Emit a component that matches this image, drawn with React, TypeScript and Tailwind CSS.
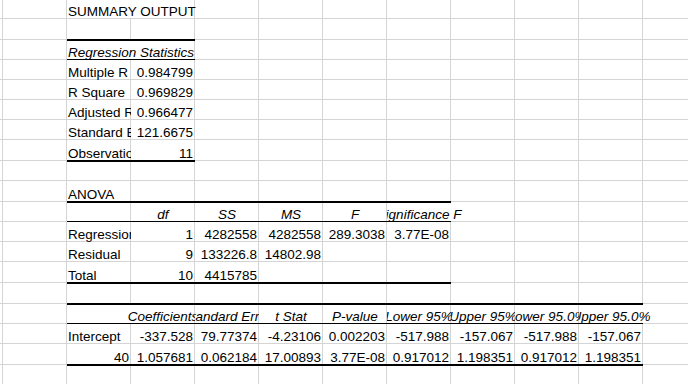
import clsx from 'clsx';

type Cell = {
  t?: string;
  a?: 'l' | 'r' | 'c';
  i?: boolean;
  spill?: 'l' | 'r';
  wide?: boolean;
  open?: boolean;
};

type Row = {
  h: string;
  line?: [number, number, 'thin' | 'thick'];
  cells?: Record<number, Cell>;
};

const hd = (t: string, extra: Partial<Cell> = {}): Cell => ({ t, a: 'c', i: true, ...extra });
const num = (t: string): Cell => ({ t, a: 'r' });
const lbl = (t: string): Cell => ({ t });

const rowOf = (label: Cell, values: string[]) => {
  const cells: Record<number, Cell> = { 0: label };
  values.forEach((v, k) => {
    if (v) cells[k + 1] = num(v);
  });
  return cells;
};

const rows: Row[] = [
  { h: 'h-[19px]', cells: { 0: { t: 'SUMMARY OUTPUT', spill: 'r', open: true } } },
  { h: 'h-[21px]', line: [0, 1, 'thick'] },
  { h: 'h-5', line: [0, 1, 'thin'], cells: { 0: hd('Regression Statistics', { wide: true, spill: 'r', open: true }) } },
  { h: 'h-5', cells: rowOf(lbl('Multiple R'), ['0.984799']) },
  { h: 'h-5', cells: rowOf(lbl('R Square'), ['0.969829']) },
  { h: 'h-5', cells: rowOf(lbl('Adjusted R Square'), ['0.966477']) },
  { h: 'h-5', cells: rowOf(lbl('Standard Error'), ['121.6675']) },
  { h: 'h-[21px]', line: [0, 1, 'thick'], cells: rowOf(lbl('Observations'), ['11']) },
  { h: 'h-5' },
  { h: 'h-[21px]', line: [0, 5, 'thick'], cells: { 0: lbl('ANOVA') } },
  {
    h: 'h-5',
    line: [0, 5, 'thin'],
    cells: { 1: hd('df'), 2: hd('SS'), 3: hd('MS'), 4: hd('F'), 5: hd('Significance F', { spill: 'r', open: true }) },
  },
  { h: 'h-5', cells: rowOf(lbl('Regression'), ['1', '4282558', '4282558', '289.3038', '3.77E-08']) },
  { h: 'h-5', cells: rowOf(lbl('Residual'), ['9', '133226.8', '14802.98']) },
  { h: 'h-[21px]', line: [0, 5, 'thick'], cells: rowOf(lbl('Total'), ['10', '4415785']) },
  { h: 'h-[21px]', line: [0, 8, 'thick'] },
  {
    h: 'h-5',
    line: [0, 8, 'thin'],
    cells: {
      0: { open: true },
      1: hd('Coefficients', { spill: 'l' }),
      2: hd('Standard Error'),
      3: hd('t Stat'),
      4: hd('P-value'),
      5: hd('Lower 95%'),
      6: hd('Upper 95%'),
      7: hd('Lower 95.0%'),
      8: hd('Upper 95.0%', { spill: 'r', open: true }),
    },
  },
  {
    h: 'h-5',
    cells: rowOf(lbl('Intercept'), [
      '-337.528', '79.77374', '-4.23106', '0.002203', '-517.988', '-157.067', '-517.988', '-157.067',
    ]),
  },
  {
    h: 'h-[21px]',
    line: [0, 8, 'thick'],
    cells: rowOf(num('40'), [
      '1.057681', '0.062184', '17.00893', '3.77E-08', '0.917012', '1.198351', '0.917012', '1.198351',
    ]),
  },
  { h: 'h-5' },
];

// gridlines and table rules are drawn as inset shadows so black rules cover the grey corners
function rules(bottomBlack: boolean, topBlack: boolean, open: boolean) {
  if (topBlack) {
    if (bottomBlack)
      return open
        ? '[box-shadow:inset_0_1px_0_#000,inset_0_-1px_0_#000]'
        : '[box-shadow:inset_0_1px_0_#000,inset_0_-1px_0_#000,inset_-1px_0_0_#d4d4d4]';
    return open
      ? '[box-shadow:inset_0_1px_0_#000,inset_0_-1px_0_#d4d4d4]'
      : '[box-shadow:inset_0_1px_0_#000,inset_-1px_0_0_#d4d4d4,inset_0_-1px_0_#d4d4d4]';
  }
  if (bottomBlack)
    return open ? '[box-shadow:inset_0_-1px_0_#000]' : '[box-shadow:inset_0_-1px_0_#000,inset_-1px_0_0_#d4d4d4]';
  return open ? '[box-shadow:inset_0_-1px_0_#d4d4d4]' : '[box-shadow:inset_-1px_0_0_#d4d4d4,inset_0_-1px_0_#d4d4d4]';
}

function GridCell({ c, bottomBlack, topBlack }: { c?: Cell; bottomBlack: boolean; topBlack: boolean }) {
  const a = c?.a ?? 'l';
  return (
    <div
      className={clsx(
        'flex h-full w-16 shrink-0 items-end',
        rules(bottomBlack, topBlack, !!c?.open),
        c?.spill === 'r'
          ? '[clip-path:inset(0_-300px_0_0)]'
          : c?.spill === 'l'
            ? '[clip-path:inset(0_0_0_-300px)]'
            : 'overflow-hidden',
      )}
    >
      {c?.t && (
        <div
          className={clsx(
            'flex shrink-0 whitespace-nowrap pb-px leading-none',
            c.wide ? 'w-32' : 'w-full min-w-0',
            a === 'r' ? 'justify-end pr-[2px]' : a === 'c' ? 'justify-center' : 'justify-start pl-[1px]',
          )}
        >
          <span className={clsx(c.i && 'italic')}>{c.t}</span>
        </div>
      )}
    </div>
  );
}

export default function App() {
  return (
    <div className="h-[384px] w-[688px] overflow-hidden bg-white font-['Liberation_Sans',Arial,sans-serif] text-[13.5px] text-black">
      {rows.map((row, r) => {
        const prev = rows[r - 1]?.line;
        return (
          <div key={r} className={clsx('flex', row.h)}>
            <div className="h-full w-[3px] shrink-0 [box-shadow:inset_-1px_0_0_#d4d4d4,inset_0_-1px_0_#d4d4d4]" />
            <div className="h-full w-16 shrink-0 [box-shadow:inset_-1px_0_0_#d4d4d4,inset_0_-1px_0_#d4d4d4]" />
            {Array.from({ length: 10 }, (_, j) => (
              <GridCell
                key={j}
                c={row.cells?.[j]}
                bottomBlack={!!row.line && j >= row.line[0] && j <= row.line[1]}
                topBlack={!!prev && prev[2] === 'thick' && j >= prev[0] && j <= prev[1]}
              />
            ))}
          </div>
        );
      })}
    </div>
  );
}
